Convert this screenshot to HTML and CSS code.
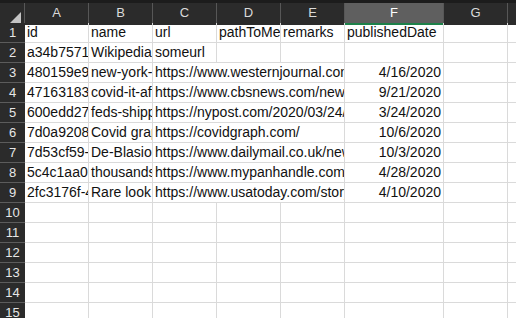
FILE: index.html
```html
<!DOCTYPE html>
<html lang="en">
<head>
    <meta charset="UTF-8">
    <title>Sheet1</title>
    <link rel="stylesheet" href="styles.css">
</head>
<body>
    <div class="sheet">
        <!-- column headers -->
        <div class="row head">
            <div class="corner"></div>
            <div class="col">A</div>
            <div class="col">B</div>
            <div class="col">C</div>
            <div class="col">D</div>
            <div class="col">E</div>
            <div class="col sel">F</div>
            <div class="col">G</div>
            <div class="col"></div>
        </div>

        <div class="row">
            <div class="num">1</div>
            <div class="cell">id</div>
            <div class="cell">name</div>
            <div class="cell">url</div>
            <div class="cell">pathToMedia</div>
            <div class="cell">remarks</div>
            <div class="cell">publishedDate</div>
            <div class="cell"></div>
            <div class="cell"></div>
        </div>
        <div class="row">
            <div class="num">2</div>
            <div class="cell">a34b7571-2f0e-4b8e-9a51-0c7e</div>
            <div class="cell">Wikipedia</div>
            <div class="cell">someurl</div>
            <div class="cell"></div>
            <div class="cell"></div>
            <div class="cell"></div>
            <div class="cell"></div>
            <div class="cell"></div>
        </div>
        <!-- long urls run over the empty D and E cells -->
        <div class="row">
            <div class="num">3</div>
            <div class="cell">480159e9-5d1c-4a77-b2e0-91f3</div>
            <div class="cell">new-york-hospitals</div>
            <div class="cell wide">https://www.westernjournal.com/new-york-hospitals</div>
            <div class="cell date">4/16/2020</div>
            <div class="cell"></div>
            <div class="cell"></div>
        </div>
        <div class="row">
            <div class="num">4</div>
            <div class="cell">47163183-0b2a-4e6f-8c19-7d42</div>
            <div class="cell">covid-it-affects</div>
            <div class="cell wide">https://www.cbsnews.com/news/covid-it-affects</div>
            <div class="cell date">9/21/2020</div>
            <div class="cell"></div>
            <div class="cell"></div>
        </div>
        <div class="row">
            <div class="num">5</div>
            <div class="cell">600edd27-9c4f-4d03-a1b8-5e6a</div>
            <div class="cell">feds-shipping</div>
            <div class="cell wide">https://nypost.com/2020/03/24/feds-shipping</div>
            <div class="cell date">3/24/2020</div>
            <div class="cell"></div>
            <div class="cell"></div>
        </div>
        <div class="row">
            <div class="num">6</div>
            <div class="cell">7d0a9208-3e7b-4c15-9f2d-a0b1</div>
            <div class="cell">Covid graph</div>
            <div class="cell wide">https://covidgraph.com/</div>
            <div class="cell date">10/6/2020</div>
            <div class="cell"></div>
            <div class="cell"></div>
        </div>
        <div class="row">
            <div class="num">7</div>
            <div class="cell">7d53cf59-c6a1-4b2e-8d70-3f95</div>
            <div class="cell">De-Blasio-says</div>
            <div class="cell wide">https://www.dailymail.co.uk/news/article</div>
            <div class="cell date">10/3/2020</div>
            <div class="cell"></div>
            <div class="cell"></div>
        </div>
        <div class="row">
            <div class="num">8</div>
            <div class="cell">5c4c1aa0-c2d8-4f61-b7a3-e14c</div>
            <div class="cell">thousands of</div>
            <div class="cell wide">https://www.mypanhandle.com/news</div>
            <div class="cell date">4/28/2020</div>
            <div class="cell"></div>
            <div class="cell"></div>
        </div>
        <div class="row">
            <div class="num">9</div>
            <div class="cell">2fc3176f-4a9e-4d2b-b61c-8e07</div>
            <div class="cell">Rare look inside</div>
            <div class="cell wide">https://www.usatoday.com/story/news</div>
            <div class="cell date">4/10/2020</div>
            <div class="cell"></div>
            <div class="cell"></div>
        </div>

        <!-- empty rows -->
        <div class="row">
            <div class="num">10</div>
            <div class="cell"></div><div class="cell"></div><div class="cell"></div><div class="cell"></div>
            <div class="cell"></div><div class="cell"></div><div class="cell"></div><div class="cell"></div>
        </div>
        <div class="row">
            <div class="num">11</div>
            <div class="cell"></div><div class="cell"></div><div class="cell"></div><div class="cell"></div>
            <div class="cell"></div><div class="cell"></div><div class="cell"></div><div class="cell"></div>
        </div>
        <div class="row">
            <div class="num">12</div>
            <div class="cell"></div><div class="cell"></div><div class="cell"></div><div class="cell"></div>
            <div class="cell"></div><div class="cell"></div><div class="cell"></div><div class="cell"></div>
        </div>
        <div class="row">
            <div class="num">13</div>
            <div class="cell"></div><div class="cell"></div><div class="cell"></div><div class="cell"></div>
            <div class="cell"></div><div class="cell"></div><div class="cell"></div><div class="cell"></div>
        </div>
        <div class="row">
            <div class="num">14</div>
            <div class="cell"></div><div class="cell"></div><div class="cell"></div><div class="cell"></div>
            <div class="cell"></div><div class="cell"></div><div class="cell"></div><div class="cell"></div>
        </div>
        <div class="row">
            <div class="num">15</div>
            <div class="cell"></div><div class="cell"></div><div class="cell"></div><div class="cell"></div>
            <div class="cell"></div><div class="cell"></div><div class="cell"></div><div class="cell"></div>
        </div>
    </div>
</body>
</html>
```

FILE: styles.css
```css
body {
    margin: 0;
    background-color: #fff;
    font-family: "Liberation Sans", Arial, sans-serif;
    overflow: hidden;
}
.sheet {
    width: 572px;
}
.row {
    display: grid;
    grid-template-columns: 25px 64px 64px 64px 64px 64px 99px 64px 64px;
    height: 20px;
}
.row > div {
    box-sizing: border-box;
}
.head {
    height: 23px;
    padding-top: 3px;
    box-sizing: border-box;
    background-color: #1c1c1c; /* strip above the headers */
}
.corner {
    background-color: #2b2b2b;
    border-right: 1px solid #575757;
    display: flex;
    justify-content: flex-end;
    align-items: flex-end;
    padding: 0 3px 2px 0;
}
.corner::after {
    content: "";
    width: 11px;
    height: 11px;
    background-color: #c4c4c4;
    clip-path: polygon(100% 0, 100% 100%, 0 100%);
}
.col {
    background-color: #2b2b2b;
    border-right: 1px solid #575757;
    color: #dadada;
    font-size: 13px;
    line-height: 20px;
    text-align: center;
}
.col.sel {
    background-color: #5f5f5f;
    color: #fff;
    border-bottom: 2px solid #1d8049;
}
.num {
    background-color: #2b2b2b;
    border-bottom: 1px solid #5c5c5c;
    color: #e6e6e6;
    font-size: 13px;
    line-height: 19px;
    text-align: center;
}
.cell {
    border-right: 1px solid #dadada;
    border-bottom: 1px solid #dadada;
    padding: 0 2px;
    color: #111;
    font-size: 14px;
    line-height: 19px;
    white-space: nowrap;
    overflow: hidden;
}
.wide {
    grid-column: span 3;
}
.date {
    text-align: right;
}
```
